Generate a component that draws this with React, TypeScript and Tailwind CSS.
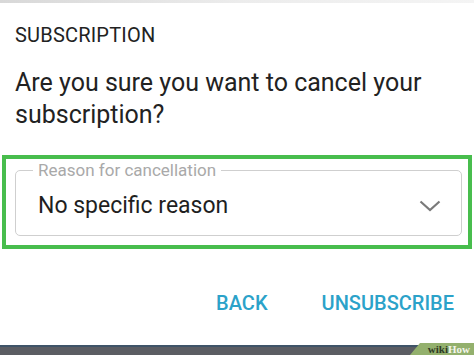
import React from "react";

export default function App() {
  return (
    <div
      className="w-[474px] h-[355px] bg-white flex flex-col overflow-hidden relative"
      style={{ fontFamily: "Roboto, 'Noto Sans', Arial, sans-serif" }}
    >
      <div className="h-[3px] bg-gradient-to-r from-[#d8d8d8] via-[#ececec] to-[#f4f4f4]" />
      <div className="pl-[15px] pt-[20px] text-[20px] leading-[24px] text-[#222] tracking-[0.2px]">SUBSCRIPTION</div>
      <div className="pl-[15px] pr-[4px] pt-[20px] text-[25px] leading-[32px] text-[#222]">
        Are you sure you want to cancel your subscription?
      </div>
      <div className="mt-[24px] mx-[2px] border-4 border-[#48bd4d] pl-[9px] pr-[6px] pt-[11px] pb-[9px]">
        <div className="relative h-[66px] border border-[#cfcfcf] rounded-[5px] flex items-center pl-[22px] pr-[20px]">
          <span className="absolute left-[17px] -top-[11px] bg-white px-[5px] text-[17px] leading-[20px] text-[#a9a9a9]">
            Reason for cancellation
          </span>
          <span className="flex-1 text-[23px] leading-[28px] text-[#1f1f1f] pt-[6px]">No specific reason</span>
          <svg width="22" height="12" viewBox="0 0 22 12" className="mt-[6px]">
            <path d="M1.5 1.5 L11 10 L20.5 1.5" fill="none" stroke="#7a7a7a" strokeWidth="2.2" />
          </svg>
        </div>
      </div>
      <div className="flex justify-end items-center gap-[54px] pr-[20px] pt-[42px] text-[20px] leading-[24px] font-medium text-[#2ba2c9]">
        <span>BACK</span>
        <span>UNSUBSCRIBE</span>
      </div>
      <div className="mt-auto relative h-[10px] bg-[#5b5d63] border-t-2 border-[#3f5468]">
        <div className="absolute right-0 bottom-0 h-[12px] w-[64px] bg-[#93b06d] [clip-path:polygon(10px_0,100%_0,100%_100%,0_100%)] flex items-center justify-end pr-[4px] text-[11px] leading-[11px] font-bold" style={{ fontFamily: "'Liberation Serif', serif" }}>
          <span className="text-[#2f3a25]">wiki</span>
          <span className="text-[#f2f5ec]">How</span>
        </div>
      </div>
    </div>
  );
}
